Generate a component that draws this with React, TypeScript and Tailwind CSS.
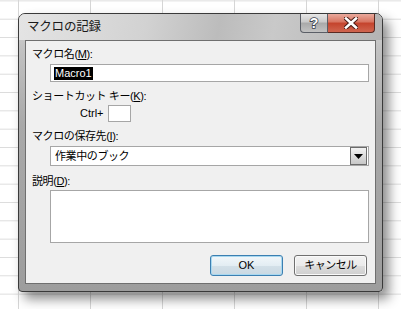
const JP = "font-['Liberation_Sans','Noto_Sans_CJK_JP',sans-serif]";

function HelpGlyph() {
  return (
    <svg width="12" height="14" viewBox="0 0 12 14">
      <text
        x="6"
        y="12"
        textAnchor="middle"
        fontSize="14"
        fontWeight="bold"
        fontFamily="Liberation Sans, sans-serif"
        fill="#ffffff"
        stroke="#3c4450"
        strokeWidth="1.6"
        paintOrder="stroke"
      >
        ?
      </text>
    </svg>
  );
}

function CloseGlyph() {
  return (
    <svg width="14" height="12" viewBox="0 0 14 12">
      <path
        d="M2 1.5 L12 10.5 M12 1.5 L2 10.5"
        stroke="#4a1a14"
        strokeWidth="4.6"
        strokeLinecap="square"
      />
      <path
        d="M2 1.5 L12 10.5 M12 1.5 L2 10.5"
        stroke="#ffffff"
        strokeWidth="2.6"
        strokeLinecap="square"
      />
    </svg>
  );
}

function Label({ text, k }: { text: string; k: string }) {
  return (
    <div className="h-[14px] text-[11px] leading-[14px] tracking-[-0.4px] text-black">
      {text}(<span className="underline underline-offset-1">{k}</span>):
    </div>
  );
}

export default function App() {
  return (
    <div
      className={`h-[309px] w-[401px] overflow-hidden bg-white bg-[linear-gradient(to_right,#d6d6d6_1px,transparent_1px),linear-gradient(to_bottom,#dcdcdc_1px,transparent_1px)] bg-[length:72px_18.33px] bg-[position:18px_0.4px] pl-[18px] pt-[13px] ${JP}`}
    >
      {/* window */}
      <div className="flex h-[279px] w-[365px] flex-col rounded-t-[7px] rounded-b-[4px] border border-[#3a3a3a] bg-[linear-gradient(to_bottom,#d9d9d9,#c2c2c2_12%,#a9a9a9_40%,#9d9d9d)] shadow-[6px_7px_12px_rgba(0,0,0,0.45)]">
        {/* title bar */}
        <div className="relative flex h-[26px] shrink-0 items-center rounded-t-[6px] bg-[linear-gradient(100deg,#e4e4e4_0%,#d2d2d2_35%,#bcbcbc_55%,#c9c9c9_70%,#b4b4b4_100%)] pl-[8px]">
          <span className="text-[12.5px] tracking-[-0.2px] text-[#1a1a1a]">マクロの記録</span>
          <div className="absolute right-[7px] top-0 flex h-[19px]">
            <div className="flex w-[28px] items-center justify-center rounded-bl-[4px] border border-t-0 border-[#5a5e66] bg-[linear-gradient(to_bottom,#e6e6e6,#c9c9c9_45%,#a9a9a9_50%,#c2c2c2)]">
              <HelpGlyph />
            </div>
            <div className="flex w-[47px] items-center justify-center rounded-br-[4px] border border-l-0 border-t-0 border-[#5a2a22] bg-[linear-gradient(to_bottom,#e9a99c,#d7735f_45%,#c4432c_50%,#d0654f)]">
              <CloseGlyph />
            </div>
          </div>
        </div>
        {/* client */}
        <div className="mx-[6px] mb-[7px] flex grow flex-col border border-[#6f6f6f] bg-[#f0f0f0] pl-[6px] pr-[6px] pt-[6px]">
          <Label text="マクロ名" k="M" />
          <div className="ml-[18px] mt-[3px] flex h-[18px] items-center border border-[#a6a6a6] bg-white pl-[3px]">
            <span className="bg-black px-[1px] text-[11px] leading-[13px] text-white">Macro1</span>
          </div>
          <div className="mt-[7px]">
            <Label text="ショートカット キー" k="K" />
          </div>
          <div className="mt-[2px] flex h-[17px] items-center">
            <span className="ml-[48px] w-[24px] text-[11px] text-black">Ctrl+</span>
            <div className="ml-[4px] h-[17px] w-[23px] border border-[#a6a6a6] bg-white" />
          </div>
          <div className="mt-[7px]">
            <Label text="マクロの保存先" k="I" />
          </div>
          <div className="ml-[18px] mt-[3px] flex h-[20px] items-center border border-[#a6a6a6] bg-white">
            <span className="grow pl-[4px] text-[11px] tracking-[-0.4px] text-black">作業中のブック</span>
            <div className="mr-[1px] flex h-[18px] w-[17px] items-center justify-center border border-[#6b6b6b] bg-[linear-gradient(to_bottom,#f2f2f2,#dcdcdc_50%,#c8c8c8)]">
              <svg width="9" height="5" viewBox="0 0 9 5">
                <path d="M0 0 H9 L4.5 5 Z" fill="#000" />
              </svg>
            </div>
          </div>
          <div className="mt-[8px]">
            <Label text="説明" k="D" />
          </div>
          <div className="ml-[18px] mt-[2px] h-[53px] border border-[#a6a6a6] bg-white" />
          <div className="mr-[2px] mt-[12px] flex justify-end gap-[11px]">
            <button className="flex h-[21px] w-[73px] items-center justify-center rounded-[3px] border border-[#3c7fb1] bg-[linear-gradient(to_bottom,#f2f7fa,#e3edf3_50%,#d3e0e8_51%,#c9d8e2)] text-[11px] text-black shadow-[inset_0_0_0_1px_#a8d8f0]">
              OK
            </button>
            <button className="flex h-[21px] w-[73px] items-center justify-center rounded-[3px] border border-[#707070] bg-[linear-gradient(to_bottom,#f2f2f2,#ebebeb_50%,#dddddd_51%,#cfcfcf)] text-[11px] tracking-[-0.5px] text-black shadow-[inset_0_0_0_1px_#fafafa]">
              キャンセル
            </button>
          </div>
        </div>
      </div>
    </div>
  );
}
